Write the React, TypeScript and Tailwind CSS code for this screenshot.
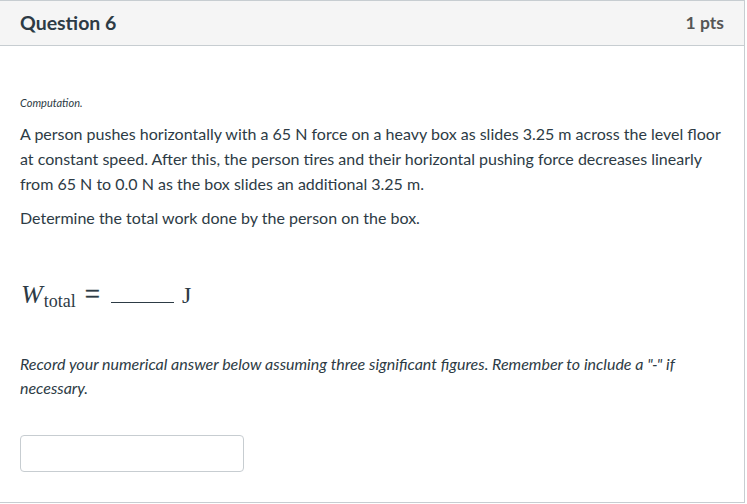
export default function App() {
  return (
    <div className="w-[747px] h-[504px] bg-white font-['Lato','Liberation_Sans',sans-serif] text-[#2d3b45]">
      <div className="w-[745px] h-[503px] border border-l-0 border-[#c7cdd1] flex flex-col">
        {/* header */}
        <div className="h-[45px] bg-[#f5f5f5] border-b border-[#c7cdd1] flex items-center justify-between pl-5 pr-5">
          <h2 className="text-[19.5px] font-bold">Question 6</h2>
          <span className="text-[17.5px] font-bold text-[#555]">1 pts</span>
        </div>

        <div className="pl-5 pr-5 pt-[49px]">
          <p className="text-[11px] italic leading-[15px] mb-[11px]">Computation.</p>
          <p className="text-[16px] leading-[25px] mb-[9px]">
            A person pushes horizontally with a 65 N force on a heavy box as slides 3.25 m across the level floor
            at constant speed. After this, the person tires and their horizontal pushing force decreases linearly
            from 65 N to 0.0 N as the box slides an additional 3.25 m.
          </p>
          <p className="text-[16px] leading-[25px]">Determine the total work done by the person on the box.</p>

          <div className="mt-[44px] h-[32px] flex items-baseline font-['Liberation_Serif',serif] text-[#2d3b45]">
            <span className="italic text-[26px] leading-[32px] ml-[1px]">W</span>
            <span className="text-[18px] relative top-[4px] ml-[1px]">total</span>
            <span className="text-[27px] ml-[9px] [-webkit-text-stroke:0.4px_#2d3b45]">=</span>
            <span className="ml-[11px] w-[63px] h-px bg-[#2d3b45] inline-block" />
            <span className="text-[24px] ml-[8px]">J</span>
          </div>

          <p className="mt-[46px] text-[16px] italic leading-[24px]">
            Record your numerical answer below assuming three significant figures. Remember to include a "-" if
            necessary.
          </p>

          <input
            type="text"
            className="mt-[35px] w-[224px] h-[37px] border border-[#c7cdd1] rounded-[4px] block"
          />
        </div>
      </div>
    </div>
  );
}
